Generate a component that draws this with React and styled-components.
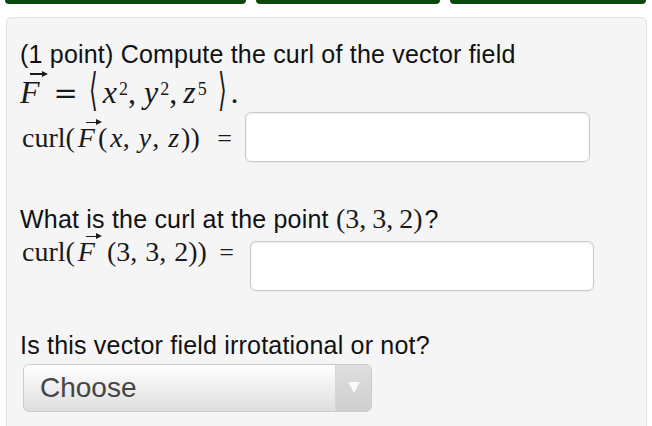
import React from 'react';
import styled, { createGlobalStyle } from 'styled-components';

const GlobalStyle = createGlobalStyle`
  html, body {
    margin: 0;
    padding: 0;
    background: #ffffff;
  }
  body {
    font-family: "Liberation Sans", Arial, sans-serif;
    color: #111;
  }
`;

const Page = styled.div`
  width: 652px;
  height: 426px;
  overflow: hidden;
`;

const TabBar = styled.div`
  display: flex;
  gap: 10px;
  padding: 0 6px 0 5px;
`;

const Tab = styled.div`
  width: ${(p) => p.w}px;
  height: 4px;
  background: #0b480b;
  border-radius: 0 0 5px 5px;
`;

const Panel = styled.div`
  margin: 13px 5px 0 6px;
  height: 420px;
  background: #f5f5f5;
  border: 1px solid #e2e2e2;
  border-radius: 5px;
  padding: 21px 0 0 13px;
  box-sizing: border-box;
`;

const Prose = styled.div`
  margin-top: ${(p) => p.mt || 0}px;
  font-size: 25px;
  line-height: 30px;
  letter-spacing: 0.2px;
  color: #111;
  white-space: nowrap;
`;

const InlineMath = styled.span`
  font-family: "Liberation Serif", "Times New Roman", serif;
  font-size: 28px;
  line-height: 1;
  letter-spacing: 0;
  color: #1a1a1a;
  margin-right: 2px;
`;

const MathLine = styled.div`
  margin-top: ${(p) => p.mt || 0}px;
  font-family: "Liberation Serif", "Times New Roman", serif;
  font-size: ${(p) => p.size || 28}px;
  line-height: 36px;
  color: #1a1a1a;
  white-space: nowrap;
`;

const Label = styled(MathLine)`
  width: ${(p) => p.w}px;
  box-sizing: border-box;
  padding-left: 2px;
  padding-right: ${(p) => p.pr}px;
  display: flex;
  align-items: baseline;
`;

const Ital = styled.span`
  font-style: italic;
  margin-left: ${(p) => p.ml || 0}px;
  margin-right: ${(p) => p.mr || 0}px;
`;

const Comma = styled.span`
  margin-right: ${(p) => p.gap || 6}px;
`;

const VecF = styled.span`
  position: relative;
  display: inline-block;
  font-style: italic;
  line-height: 1;
  margin-left: ${(p) => p.ml || 0}px;
  margin-right: ${(p) => p.mr || 0}px;
  &::before {
    content: '';
    position: absolute;
    left: 0.3em;
    top: -0.08em;
    width: 0.5em;
    height: 1.5px;
    background: #1a1a1a;
  }
  &::after {
    content: '';
    position: absolute;
    left: calc(0.8em - 4px);
    top: calc(-0.08em - 2.5px);
    width: 0;
    height: 0;
    border-left: 6px solid #1a1a1a;
    border-top: 3.3px solid transparent;
    border-bottom: 3.3px solid transparent;
  }
`;

const Sup = styled.span`
  font-size: 18px;
  line-height: 1;
  position: relative;
  top: -8px;
  margin-left: 2px;
`;

const Bracket = styled.span`
  display: inline-block;
  font-family: "DejaVu Serif", serif;
  font-size: 28px;
  line-height: 1;
  transform: translateY(-3px) scale(0.8, 1.6);
  margin-left: ${(p) => p.ml || 0}px;
  margin-right: ${(p) => p.mr || 0}px;
`;

const WideEq = styled.span`
  font-family: "DejaVu Serif", serif;
  font-size: 29px;
  line-height: 1;
  margin-left: ${(p) => p.ml}px;
  margin-right: ${(p) => p.mr}px;
`;

const Eq = styled.span`
  margin-left: auto;
  font-size: 26px;
`;

const AnswerRow = styled.div`
  display: flex;
  align-items: flex-start;
  margin-top: ${(p) => p.mt || 0}px;
`;

const AnswerBox = styled.div`
  margin-top: ${(p) => p.mt || 0}px;
  width: ${(p) => p.w}px;
  height: 50px;
  box-sizing: border-box;
  background: #fff;
  border: 1px solid #cacaca;
  border-radius: 6px;
  box-shadow: inset 0 1px 2px rgba(0, 0, 0, 0.08), 0 1px 1px rgba(0, 0, 0, 0.04);
`;

const Select = styled.div`
  margin-top: 4px;
  margin-left: 3px;
  width: 349px;
  height: 48px;
  box-sizing: border-box;
  border: 1px solid #cbcbcb;
  border-radius: 6px;
  background: linear-gradient(#ffffff, #dedede);
  display: flex;
  overflow: hidden;
`;

const SelectLabel = styled.div`
  flex: 1;
  display: flex;
  align-items: center;
  padding-left: 16px;
  font-size: 28px;
  color: #454545;
`;

const SelectArrow = styled.div`
  width: 35px;
  background: linear-gradient(#dedede, #cfcfcf);
  border-left: 1px solid #d6d6d6;
  display: flex;
  align-items: center;
  justify-content: center;
  &::after {
    content: '';
    border-top: 11px solid #fafafa;
    border-left: 6px solid transparent;
    border-right: 6px solid transparent;
    margin-bottom: 2px;
  }
`;

export default function App() {
  return (
    <Page>
      <GlobalStyle />
      <TabBar>
        <Tab w={241} />
        <Tab w={184} />
        <Tab w={196} />
      </TabBar>
      <Panel>
        <Prose>(1 point) Compute the curl of the vector field</Prose>
        <MathLine size={32} mt={5}>
          <VecF>F</VecF>
          <WideEq ml={14} mr={10}>=</WideEq>
          <Bracket mr={4}>⟨</Bracket>
          <Ital>x</Ital>
          <Sup>2</Sup>
          <Comma gap={8}>,</Comma>
          <Ital>y</Ital>
          <Sup>2</Sup>
          <Comma gap={6}>,</Comma>
          <Ital>z</Ital>
          <Sup>5</Sup>
          <Bracket ml={10} mr={3}>⟩</Bracket>
          <span>.</span>
        </MathLine>
        <AnswerRow mt={2}>
          <Label w={225} pr={13} mt={8}>
            curl(
            <VecF ml={3} mr={3}>F</VecF>
            (<Ital ml={3}>x</Ital>
            <Comma gap={9}>,</Comma>
            <Ital mr={1}>y</Ital>
            <Comma gap={9}>,</Comma>
            <Ital mr={2}>z</Ital>
            ))
            <Eq>=</Eq>
          </Label>
          <AnswerBox w={345} />
        </AnswerRow>
        <Prose mt={42}>
          What is the curl at the point{' '}
          <InlineMath>
            (3,<Comma gap={6} />3,<Comma gap={6} />2)
          </InlineMath>
          ?
        </Prose>
        <AnswerRow>
          <Label w={230} pr={16}>
            curl(
            <VecF ml={3} mr={12}>F</VecF>
            (3<Comma gap={8}>,</Comma>3<Comma gap={8}>,</Comma>2))
            <Eq>=</Eq>
          </Label>
          <AnswerBox mt={7} w={344} />
        </AnswerRow>
        <Prose mt={39}>Is this vector field irrotational or not?</Prose>
        <Select>
          <SelectLabel>Choose</SelectLabel>
          <SelectArrow />
        </Select>
      </Panel>
    </Page>
  );
}
